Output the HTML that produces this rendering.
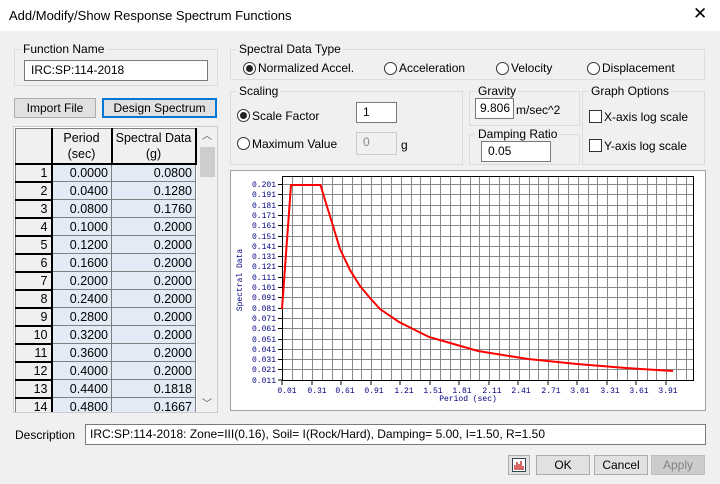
<!DOCTYPE html>
<html><head><style>
*{box-sizing:border-box;margin:0;padding:0}
body{width:720px;height:484px;background:#f0f0f0;font-family:"Liberation Sans",sans-serif;font-size:12px;color:#000;position:relative;overflow:hidden}
.a{position:absolute}
.gb{position:absolute;border:1px solid #dcdcdc}
.gb>span{position:absolute;top:-8px;left:6px;background:#f0f0f0;padding:0 2px;line-height:14px}
.inp{position:absolute;background:#fff;border:1px solid #7a7a7a;padding-left:6px;line-height:18px}
.btn{position:absolute;background:#e1e1e1;border:1px solid #adadad;text-align:center;line-height:18px}
.rad{position:absolute;width:13px;height:13px;border:1px solid #333;border-radius:50%;background:#fff}
.rad.on::after{content:"";position:absolute;left:2px;top:2px;width:7px;height:7px;border-radius:50%;background:#222}
.chk{position:absolute;width:13px;height:13px;border:1px solid #333;background:#fff}
table{border-collapse:collapse;position:absolute;left:15px;top:127px}
td{height:18px;border:1px solid #808080;text-align:right;padding-right:3px;font-size:12.5px;background:#e3ebf7}
td.n{background:#f0f0f0;border-right:2px solid #000;border-bottom:2px solid #000;width:36px}
th{font-weight:normal;font-size:12.5px;border:1px solid #808080;border-right:2px solid #000;border-bottom:2px solid #000;background:#f0f0f0;height:35px;line-height:16px}
svg text{font-family:"Liberation Mono",monospace;font-size:8px;fill:#000080}
</style></head><body>
<div class="a" style="left:0;top:0;width:720px;height:31px;background:#fff"></div>
<div class="a" style="left:9px;top:8px;font-size:13px">Add/Modify/Show Response Spectrum Functions</div>
<div class="a" style="left:693px;top:4px;font-size:17px">✕</div>

<div class="gb" style="left:14px;top:49px;width:204px;height:37px"><span>Function Name</span></div>
<div class="inp" style="left:24px;top:60px;width:184px;height:21px">IRC:SP:114-2018</div>

<div class="btn" style="left:14px;top:98px;width:82px;height:20px">Import File</div>
<div class="btn" style="left:102px;top:98px;width:115px;height:20px;border:2px solid #0078d7;line-height:16px">Design Spectrum</div>

<div class="a" style="left:13px;top:126px;width:205px;height:287px;background:#fff;border:1px solid #ccc;overflow:hidden">
<table style="left:1px;top:1px">
<tr><th style="width:36px"></th><th style="width:60px">Period<br>(sec)</th><th style="width:84px">Spectral Data<br>(g)</th></tr>
<tr><td class="n">1</td><td>0.0000</td><td>0.0800</td></tr>
<tr><td class="n">2</td><td>0.0400</td><td>0.1280</td></tr>
<tr><td class="n">3</td><td>0.0800</td><td>0.1760</td></tr>
<tr><td class="n">4</td><td>0.1000</td><td>0.2000</td></tr>
<tr><td class="n">5</td><td>0.1200</td><td>0.2000</td></tr>
<tr><td class="n">6</td><td>0.1600</td><td>0.2000</td></tr>
<tr><td class="n">7</td><td>0.2000</td><td>0.2000</td></tr>
<tr><td class="n">8</td><td>0.2400</td><td>0.2000</td></tr>
<tr><td class="n">9</td><td>0.2800</td><td>0.2000</td></tr>
<tr><td class="n">10</td><td>0.3200</td><td>0.2000</td></tr>
<tr><td class="n">11</td><td>0.3600</td><td>0.2000</td></tr>
<tr><td class="n">12</td><td>0.4000</td><td>0.2000</td></tr>
<tr><td class="n">13</td><td>0.4400</td><td>0.1818</td></tr>
<tr><td class="n">14</td><td>0.4800</td><td>0.1667</td></tr>
</table>
<div class="a" style="left:183px;top:0;width:21px;height:287px;background:#f0f0f0"></div>
<div class="a" style="left:186px;top:20px;width:15px;height:30px;background:#cdcdcd"></div>
<div class="a" style="left:188px;top:0;font-size:10px;color:#555">︿</div>
<div class="a" style="left:188px;top:268px;font-size:10px;color:#555">﹀</div>
</div>

<div class="gb" style="left:230px;top:49px;width:475px;height:31px"><span>Spectral Data Type</span></div>
<div class="rad on" style="left:243px;top:62px"></div><div class="a" style="left:258px;top:61px">Normalized Accel.</div>
<div class="rad" style="left:384px;top:62px"></div><div class="a" style="left:399px;top:61px">Acceleration</div>
<div class="rad" style="left:496px;top:62px"></div><div class="a" style="left:511px;top:61px">Velocity</div>
<div class="rad" style="left:587px;top:62px"></div><div class="a" style="left:602px;top:61px">Displacement</div>

<div class="gb" style="left:230px;top:91px;width:233px;height:74px"><span>Scaling</span></div>
<div class="rad on" style="left:237px;top:109px"></div><div class="a" style="left:252px;top:109px">Scale Factor</div>
<div class="inp" style="left:356px;top:102px;width:41px;height:21px">1</div>
<div class="rad" style="left:237px;top:137px"></div><div class="a" style="left:252px;top:137px">Maximum Value</div>
<div class="inp" style="left:356px;top:132px;width:41px;height:23px;background:#f0f0f0;border-color:#ccc;color:#888">0</div>
<div class="a" style="left:401px;top:138px">g</div>

<div class="gb" style="left:469px;top:91px;width:111px;height:35px"><span>Gravity</span></div>
<div class="inp" style="left:475px;top:98px;width:39px;height:21px;padding-left:4px">9.806</div>
<div class="a" style="left:516px;top:103px">m/sec^2</div>
<div class="gb" style="left:469px;top:134px;width:111px;height:31px"><span>Damping Ratio</span></div>
<div class="inp" style="left:481px;top:141px;width:70px;height:21px">0.05</div>

<div class="gb" style="left:582px;top:91px;width:123px;height:74px"><span>Graph Options</span></div>
<div class="chk" style="left:589px;top:110px"></div><div class="a" style="left:604px;top:110px">X-axis log scale</div>
<div class="chk" style="left:589px;top:139px"></div><div class="a" style="left:604px;top:139px">Y-axis log scale</div>

<div class="a" style="left:230px;top:170px;width:476px;height:241px;background:#fff;border:1px solid #a0a0a0"></div>
<svg class="a" style="left:0;top:0" width="720" height="484">
<g stroke="#888" stroke-width="1">
<path d="M282 184.5H693M282 194.5H693M282 205.5H693M282 215.5H693M282 225.5H693M282 236.5H693M282 246.5H693M282 256.5H693M282 266.5H693M282 277.5H693M282 287.5H693M282 297.5H693M282 308.5H693M282 318.5H693M282 328.5H693M282 339.5H693M282 349.5H693M282 359.5H693M282 369.5H693"/>
<path d="M292.5 177V380M302.5 177V380M312.5 177V380M322.5 177V380M332.5 177V380M342.5 177V380M352.5 177V380M361.5 177V380M371.5 177V380M381.5 177V380M391.5 177V380M401.5 177V380M411.5 177V380M420.5 177V380M430.5 177V380M440.5 177V380M450.5 177V380M460.5 177V380M470.5 177V380M479.5 177V380M489.5 177V380M499.5 177V380M509.5 177V380M519.5 177V380M529.5 177V380M538.5 177V380M548.5 177V380M558.5 177V380M568.5 177V380M578.5 177V380M588.5 177V380M597.5 177V380M607.5 177V380M617.5 177V380M627.5 177V380M637.5 177V380M647.5 177V380M656.5 177V380M666.5 177V380M676.5 177V380M686.5 177V380"/>
</g>
<rect x="282.5" y="176.5" width="411" height="204" fill="none" stroke="#000"/>
<path d="M282 380v5M312 380v5M341 380v5M371 380v5M400 380v5M430 380v5M459 380v5M489 380v5M518 380v5M548 380v5M577 380v5M607 380v5M636 380v5M666 380v5M278 184.5h4M278 194.5h4M278 205.5h4M278 215.5h4M278 225.5h4M278 236.5h4M278 246.5h4M278 256.5h4M278 266.5h4M278 277.5h4M278 287.5h4M278 297.5h4M278 308.5h4M278 318.5h4M278 328.5h4M278 339.5h4M278 349.5h4M278 359.5h4M278 369.5h4M278 380h4" stroke="#000"/>
<polyline fill="none" stroke="#f00" stroke-width="2" points="282,309 291,185 320.5,185 325,200 330,216 340,249 350,270 360,286 370,298 380,309 399,322 429,337 478,351 528,359 577,364 626,368 673,371"/>
<g text-anchor="end">
<text x="276" y="187">0.201</text><text x="276" y="197">0.191</text><text x="276" y="208">0.181</text><text x="276" y="218">0.171</text><text x="276" y="228">0.161</text><text x="276" y="239">0.151</text><text x="276" y="249">0.141</text><text x="276" y="259">0.131</text><text x="276" y="269">0.121</text><text x="276" y="280">0.111</text><text x="276" y="290">0.101</text><text x="276" y="300">0.091</text><text x="276" y="311">0.081</text><text x="276" y="321">0.071</text><text x="276" y="331">0.061</text><text x="276" y="342">0.051</text><text x="276" y="352">0.041</text><text x="276" y="362">0.031</text><text x="276" y="372">0.021</text><text x="276" y="383">0.011</text>
</g>
<g text-anchor="middle">
<text x="287" y="393">0.01</text><text x="317" y="393">0.31</text><text x="345" y="393">0.61</text><text x="374" y="393">0.91</text><text x="404" y="393">1.21</text><text x="433" y="393">1.51</text><text x="462" y="393">1.81</text><text x="492" y="393">2.11</text><text x="521" y="393">2.41</text><text x="551" y="393">2.71</text><text x="580" y="393">3.01</text><text x="610" y="393">3.31</text><text x="639" y="393">3.61</text><text x="668" y="393">3.91</text>
<text x="468" y="401">Period (sec)</text>
<text transform="translate(242,280) rotate(-90)">Spectral Data</text>
</g>
</svg>

<div class="a" style="left:15px;top:428px">Description</div>
<div class="inp" style="left:85px;top:424px;width:621px;height:21px;padding-left:4px">IRC:SP:114-2018: Zone=III(0.16), Soil= I(Rock/Hard), Damping= 5.00, I=1.50, R=1.50</div>

<div class="btn" style="left:508px;top:455px;width:22px;height:20px"><svg width="14" height="14" style="margin-top:2px"><rect x="0.5" y="0.5" width="13" height="13" fill="#fff" stroke="#345"/><path d="M3 12V7M5 12V4M7 12V6M9 12V3M11 12V8" stroke="#c33" stroke-width="1.5"/></svg></div>
<div class="btn" style="left:536px;top:455px;width:54px;height:20px">OK</div>
<div class="btn" style="left:594px;top:455px;width:54px;height:20px">Cancel</div>
<div class="btn" style="left:651px;top:455px;width:54px;height:20px;background:#ccc;border-color:#bfbfbf;color:#838383">Apply</div>
</body></html>
